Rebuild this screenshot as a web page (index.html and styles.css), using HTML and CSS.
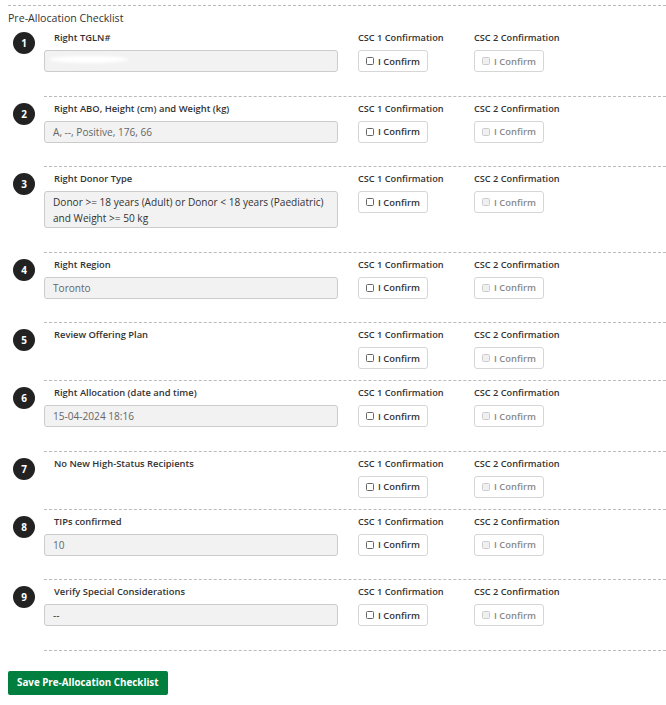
FILE: index.html
```html
<!DOCTYPE html>
<html lang="en">
<head>
<meta charset="utf-8">
<title>Pre-Allocation Checklist</title>
<link rel="stylesheet" href="styles.css">
</head>
<body>
<section class="checklist">
  <div class="title">Pre-Allocation Checklist</div>

  <div class="row">
    <div class="badge-col"><span class="badge">1</span></div>
    <div class="body">
      <div class="field">
        <div class="label">Right TGLN#</div>
        <div class="input redacted"><span class="smudge"></span></div>
      </div>
      <div class="csc">
        <div class="label">CSC 1 Confirmation</div>
        <label class="confirm"><span class="box"></span>I Confirm</label>
      </div>
      <div class="csc">
        <div class="label">CSC 2 Confirmation</div>
        <label class="confirm disabled"><span class="box"></span>I Confirm</label>
      </div>
    </div>
  </div>

  <div class="row">
    <div class="badge-col"><span class="badge">2</span></div>
    <div class="body">
      <div class="field">
        <div class="label">Right ABO, Height (cm) and Weight (kg)</div>
        <div class="input">A, --, Positive, 176, 66</div>
      </div>
      <div class="csc">
        <div class="label">CSC 1 Confirmation</div>
        <label class="confirm"><span class="box"></span>I Confirm</label>
      </div>
      <div class="csc">
        <div class="label">CSC 2 Confirmation</div>
        <label class="confirm disabled"><span class="box"></span>I Confirm</label>
      </div>
    </div>
  </div>

  <div class="row">
    <div class="badge-col"><span class="badge">3</span></div>
    <div class="body">
      <div class="field">
        <div class="label">Right Donor Type</div>
        <div class="input dark">Donor &gt;= 18 years (Adult) or Donor &lt; 18 years (Paediatric) and Weight &gt;= 50 kg</div>
      </div>
      <div class="csc">
        <div class="label">CSC 1 Confirmation</div>
        <label class="confirm"><span class="box"></span>I Confirm</label>
      </div>
      <div class="csc">
        <div class="label">CSC 2 Confirmation</div>
        <label class="confirm disabled"><span class="box"></span>I Confirm</label>
      </div>
    </div>
  </div>

  <div class="row">
    <div class="badge-col"><span class="badge">4</span></div>
    <div class="body">
      <div class="field">
        <div class="label">Right Region</div>
        <div class="input">Toronto</div>
      </div>
      <div class="csc">
        <div class="label">CSC 1 Confirmation</div>
        <label class="confirm"><span class="box"></span>I Confirm</label>
      </div>
      <div class="csc">
        <div class="label">CSC 2 Confirmation</div>
        <label class="confirm disabled"><span class="box"></span>I Confirm</label>
      </div>
    </div>
  </div>

  <div class="row">
    <div class="badge-col"><span class="badge">5</span></div>
    <div class="body">
      <div class="field">
        <div class="label">Review Offering Plan</div>
      </div>
      <div class="csc">
        <div class="label">CSC 1 Confirmation</div>
        <label class="confirm"><span class="box"></span>I Confirm</label>
      </div>
      <div class="csc">
        <div class="label">CSC 2 Confirmation</div>
        <label class="confirm disabled"><span class="box"></span>I Confirm</label>
      </div>
    </div>
  </div>

  <div class="row">
    <div class="badge-col"><span class="badge">6</span></div>
    <div class="body">
      <div class="field">
        <div class="label">Right Allocation (date and time)</div>
        <div class="input">15-04-2024 18:16</div>
      </div>
      <div class="csc">
        <div class="label">CSC 1 Confirmation</div>
        <label class="confirm"><span class="box"></span>I Confirm</label>
      </div>
      <div class="csc">
        <div class="label">CSC 2 Confirmation</div>
        <label class="confirm disabled"><span class="box"></span>I Confirm</label>
      </div>
    </div>
  </div>

  <div class="row">
    <div class="badge-col"><span class="badge">7</span></div>
    <div class="body">
      <div class="field">
        <div class="label">No New High-Status Recipients</div>
      </div>
      <div class="csc">
        <div class="label">CSC 1 Confirmation</div>
        <label class="confirm"><span class="box"></span>I Confirm</label>
      </div>
      <div class="csc">
        <div class="label">CSC 2 Confirmation</div>
        <label class="confirm disabled"><span class="box"></span>I Confirm</label>
      </div>
    </div>
  </div>

  <div class="row">
    <div class="badge-col"><span class="badge">8</span></div>
    <div class="body">
      <div class="field">
        <div class="label">TIPs confirmed</div>
        <div class="input">10</div>
      </div>
      <div class="csc">
        <div class="label">CSC 1 Confirmation</div>
        <label class="confirm"><span class="box"></span>I Confirm</label>
      </div>
      <div class="csc">
        <div class="label">CSC 2 Confirmation</div>
        <label class="confirm disabled"><span class="box"></span>I Confirm</label>
      </div>
    </div>
  </div>

  <div class="row">
    <div class="badge-col"><span class="badge">9</span></div>
    <div class="body">
      <div class="field">
        <div class="label">Verify Special Considerations</div>
        <div class="input dark">--</div>
      </div>
      <div class="csc">
        <div class="label">CSC 1 Confirmation</div>
        <label class="confirm"><span class="box"></span>I Confirm</label>
      </div>
      <div class="csc">
        <div class="label">CSC 2 Confirmation</div>
        <label class="confirm disabled"><span class="box"></span>I Confirm</label>
      </div>
    </div>
  </div>
</section>

<button class="save" type="button">Save Pre-Allocation Checklist</button>
</body>
</html>
```

FILE: styles.css
```css
* { box-sizing: border-box; }

body {
  margin: 0;
  padding: 5px 0 0 8px;
  font-family: "Open Sans", "Liberation Sans", sans-serif;
  color: #333;
  background: #fff;
}

.checklist {
  border-top: 1px dashed #bbb;
}

.title {
  font-size: 10.6px;
  line-height: 16px;
  padding-top: 4px;
  color: #333;
}

.row {
  display: flex;
}

.badge-col {
  width: 36px;
  flex: none;
  padding: 6px 0 0 5px;
}

.badge {
  display: flex;
  align-items: center;
  justify-content: center;
  width: 22px;
  height: 22px;
  border-radius: 50%;
  background: #222;
  color: #fff;
  font-size: 10px;
  font-weight: 700;
}

.body {
  flex: 1;
  display: flex;
  align-items: flex-start;
  padding: 4px 0 11px;
  border-bottom: 1px dashed #bbb;
}

.field {
  width: 294px;
  flex: none;
  margin-right: 20px;
}

.label {
  font-size: 9.4px;
  font-weight: 600;
  line-height: 16px;
  margin-bottom: 4px;
  color: #333;
}

.csc .label {
  font-size: 9.2px;
}

.field .label {
  padding-left: 10px;
}

.input {
  position: relative;
  min-height: 22px;
  padding: 2px 8px 1px;
  border: 1px solid #ccc;
  border-radius: 3px;
  background: #f2f2f2;
  font-size: 10.1px;
  line-height: 16px;
  color: #666;
  margin-bottom: 12.5px;
}

.input.dark { color: #333; }

.smudge {
  position: absolute;
  left: 4px;
  top: 5px;
  width: 80px;
  height: 7px;
  border-radius: 50%;
  background: #fff;
  filter: blur(1.5px);
}

.csc {
  width: 116px;
  flex: none;
}

.confirm {
  display: flex;
  width: fit-content;
  align-items: center;
  height: 22px;
  padding: 0 7px 0 7px;
  border: 1px solid #d6d6d6;
  border-radius: 3px;
  background: #fff;
  font-size: 9.4px;
  font-weight: 600;
  color: #333;
}

.box {
  width: 8px;
  height: 8px;
  border: 1px solid #666;
  border-radius: 1.5px;
  margin-right: 4px;
  background: #fff;
}

.confirm.disabled { color: #888; }
.confirm.disabled .box {
  border-color: #ccc;
  background: #f0f0f0;
}

.save {
  display: block;
  margin-top: 20px;
  height: 24px;
  padding: 0 9px;
  border: none;
  border-radius: 2px;
  background: #007f3f;
  color: #fff;
  font-family: "Open Sans", "Liberation Sans", sans-serif;
  font-size: 9.8px;
  font-weight: 700;
}
```
